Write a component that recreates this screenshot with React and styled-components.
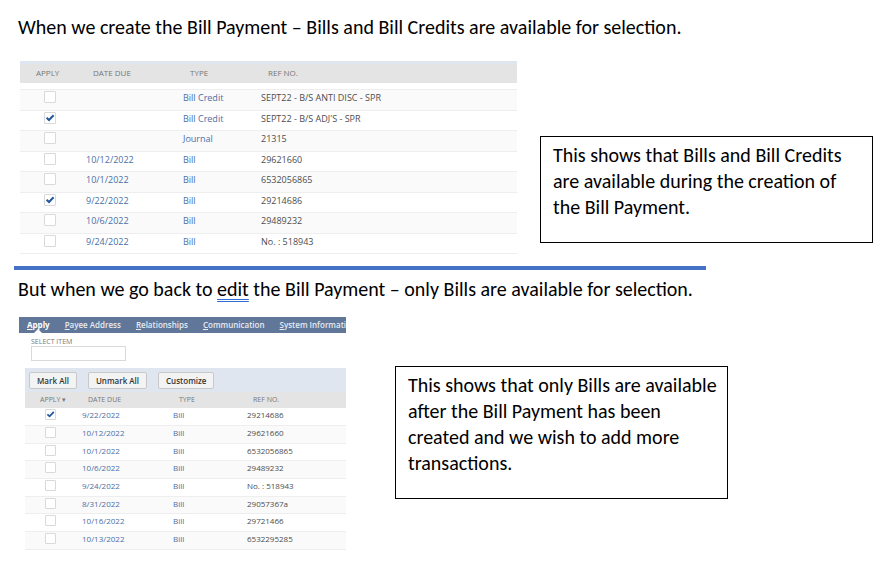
import React from 'react';
import styled, { createGlobalStyle } from 'styled-components';

const COLORS = {
  link: '#4a6fa8',
  text: '#4d4d4d',
  header: '#777777',
  header_bg: '#e4e4e4',
  stripe: '#fafafa',
  line: '#eeeeee',
  nav: '#607799',
  toolbar: '#dfe6f0',
  rule: '#4472c4',
};

const CREATE_ROWS = [
  { type: 'Bill Credit', ref: 'SEPT22 - B/S ANTI DISC - SPR' },
  { type: 'Bill Credit', ref: "SEPT22 - B/S ADJ'S - SPR", checked: true },
  { type: 'Journal', ref: '21315' },
  { date: '10/12/2022', type: 'Bill', ref: '29621660' },
  { date: '10/1/2022', type: 'Bill', ref: '6532056865' },
  { date: '9/22/2022', type: 'Bill', ref: '29214686', checked: true },
  { date: '10/6/2022', type: 'Bill', ref: '29489232' },
  { date: '9/24/2022', type: 'Bill', ref: 'No. : 518943' },
];

const EDIT_ROWS = [
  { date: '9/22/2022', type: 'Bill', ref: '29214686', checked: true },
  { date: '10/12/2022', type: 'Bill', ref: '29621660' },
  { date: '10/1/2022', type: 'Bill', ref: '6532056865' },
  { date: '10/6/2022', type: 'Bill', ref: '29489232' },
  { date: '9/24/2022', type: 'Bill', ref: 'No. : 518943' },
  { date: '8/31/2022', type: 'Bill', ref: '29057367a' },
  { date: '10/16/2022', type: 'Bill', ref: '29721466' },
  { date: '10/13/2022', type: 'Bill', ref: '6532295285' },
];

const TABS = ['Apply', 'Payee Address', 'Relationships', 'Communication', 'System Information'];

const ApplyBox = ({ label, checked, $small }) => (
  <CheckLabel $small={$small}>
    <CheckInput type="checkbox" aria-label={label} defaultChecked={checked} />
    <CheckMark viewBox="0 0 12 12" aria-hidden="true">
      <path d="M2.6 5.8 L5 8 L9.6 3.2" />
    </CheckMark>
  </CheckLabel>
);

const BillRows = ({ rows, $small }) =>
  rows.map((row) => (
    <tr key={row.ref}>
      <CheckCell>
        <ApplyBox label={`Apply ${row.ref}`} checked={row.checked} $small={$small} />
      </CheckCell>
      <td>{row.date && <BillLink href="#bill">{row.date}</BillLink>}</td>
      <td>
        <BillLink href="#bill">{row.type}</BillLink>
      </td>
      <td>{row.ref}</td>
    </tr>
  ));

const App = () => {
  return (
    <Page>
      <GlobalStyle />
      <Heading>
        When we create the Bill Payment – Bills and Bill Credits are available for selection.
      </Heading>
      <CreateSection>
        <CreateTable>
          <colgroup>
            <Col $width={59} />
            <Col $width={97} />
            <Col $width={78} />
            <col />
          </colgroup>
          <thead>
            <tr>
              <th>APPLY</th>
              <th>DATE DUE</th>
              <th>TYPE</th>
              <th>REF NO.</th>
            </tr>
          </thead>
          <tbody>
            <BillRows rows={CREATE_ROWS} />
          </tbody>
        </CreateTable>
        <Note $top={75} $height={107}>
          This shows that Bills and Bill Credits are available during the creation of the Bill
          Payment.
        </Note>
      </CreateSection>
      <RuleRow>
        <Rule />
      </RuleRow>
      <Heading>
        But when we go back to <Edit>edit</Edit> the Bill Payment – only Bills are available for
        selection.
      </Heading>
      <EditSection>
        <Panel>
          <Tabs>
            {TABS.map((tab, i) => (
              <Tab key={tab} type="button" $active={i === 0}>
                <u>{tab[0]}</u>
                {tab.slice(1)}
              </Tab>
            ))}
          </Tabs>
          <Field>
            <FieldLabel htmlFor="select-item">SELECT ITEM</FieldLabel>
            <FieldInput id="select-item" type="text" />
          </Field>
          <Sublist>
            <Toolbar>
              <ToolButton type="button">Mark All</ToolButton>
              <ToolButton type="button">Unmark All</ToolButton>
              <ToolButton type="button">Customize</ToolButton>
            </Toolbar>
            <EditTable>
              <colgroup>
                <Col $width={51} />
                <Col $width={91} />
                <Col $width={74} />
                <col />
              </colgroup>
              <thead>
                <tr>
                  <th>APPLY ▾</th>
                  <th>DATE DUE</th>
                  <th>TYPE</th>
                  <th>REF NO.</th>
                </tr>
              </thead>
              <tbody>
                <BillRows rows={EDIT_ROWS} $small />
              </tbody>
            </EditTable>
          </Sublist>
        </Panel>
        <Note $top={49} $height={133}>
          This shows that only Bills are available after the Bill Payment has been created and we
          wish to add more transactions.
        </Note>
      </EditSection>
    </Page>
  );
};

export default App;

const GlobalStyle = createGlobalStyle`
  * {
    box-sizing: border-box;
  }

  body {
    margin: 0;
    background: #ffffff;
    font-family: 'Open Sans', 'Noto Sans', sans-serif;
  }
`;

const Page = styled.main`
  padding: 12px 22px 0 14px;
`;

const Heading = styled.p`
  margin: 0;
  padding-left: 4px;
  color: #000000;
  font-family: Carlito, Lato, sans-serif;
  font-size: 20px;
  line-height: 30px;
`;

const Edit = styled.span`
  text-decoration: underline double #2f6bd0 1px;
  text-underline-offset: 3px;
  text-decoration-skip-ink: none;
`;

const CreateSection = styled.section`
  display: grid;
  grid-template-columns: 497fr 333fr;
  gap: 23px;
  align-items: start;
  margin-top: 19px;
  padding-left: 6px;
`;

const EditSection = styled.section`
  display: grid;
  grid-template-columns: 327fr 333fr 96fr;
  gap: 49px;
  align-items: start;
  margin-top: 13px;
  padding-left: 5px;
`;

const RuleRow = styled.div`
  display: grid;
  grid-template-columns: 692fr 167fr;
  margin: 12px 0 4px;
`;

const Rule = styled.hr`
  width: 100%;
  height: 4px;
  margin: 0;
  border: none;
  background: ${COLORS.rule};
`;

const Note = styled.aside`
  min-height: ${({ $height }) => $height}px;
  margin-top: ${({ $top }) => $top}px;
  padding: 5px 6px 5px 12px;
  border: 1px solid #000000;
  color: #000000;
  font-family: Carlito, Lato, sans-serif;
  font-size: 20px;
  line-height: 26px;
`;

const Table = styled.table`
  width: 100%;
  table-layout: fixed;
  border-collapse: separate;
  border-spacing: 0;
  color: ${COLORS.text};

  th {
    padding: 0;
    background: ${COLORS.header_bg};
    color: ${COLORS.header};
    font-weight: 400;
    text-align: left;
    vertical-align: top;
    white-space: nowrap;
  }

  td {
    padding: 0 0 0 7px;
    border-bottom: 1px solid ${COLORS.line};
    vertical-align: top;
    white-space: nowrap;
  }
`;

const CreateTable = styled(Table)`
  border-top: 3px solid ${COLORS.toolbar};
  font-size: 9px;
  line-height: 15px;

  th {
    height: 19px;
    padding-left: 14px;
    font-size: 8px;
    line-height: 18px;
  }

  th:first-child {
    padding-left: 16px;
  }

  /* blank strip between the header and the first row */
  tbody::before {
    content: '';
    display: table-row;
    height: 6px;
  }

  td {
    height: 20px;
  }

  tr:nth-child(odd) td {
    height: 21px;
    background: ${COLORS.stripe};
  }

  tr:first-child td {
    height: 22px;
    border-top: 1px solid ${COLORS.line};
  }
`;

const EditTable = styled(Table)`
  font-size: 8px;
  line-height: 14px;

  th {
    height: 16px;
    padding-left: 12px;
    font-size: 7px;
    line-height: 16px;
  }

  th:first-child {
    padding-left: 15px;
  }

  td {
    height: 18px;
    padding-left: 6px;
  }

  tr:nth-child(3n) td {
    height: 17px;
  }

  tr:nth-child(even) td {
    background: ${COLORS.stripe};
  }
`;

const Col = styled.col`
  width: ${({ $width }) => $width}px;
`;

const CheckCell = styled.td`
  && {
    padding: 0;
    text-align: center;
    line-height: 0;
  }
`;

const CheckLabel = styled.label`
  position: relative;
  display: inline-block;
  width: ${({ $small }) => ($small ? 11 : 12)}px;
  height: ${({ $small }) => ($small ? 11 : 12)}px;
  margin-top: 1px;
`;

const CheckInput = styled.input`
  appearance: none;
  display: block;
  width: 100%;
  height: 100%;
  margin: 0;
  border: 1px solid #d9d9d9;
  border-radius: 1px;
  background: #ffffff;
`;

const CheckMark = styled.svg`
  position: absolute;
  inset: 0;
  width: 100%;
  height: 100%;
  fill: none;
  stroke: #2458a0;
  stroke-width: 2;
  visibility: hidden;
  pointer-events: none;

  ${CheckInput}:checked + & {
    visibility: visible;
  }
`;

const BillLink = styled.a`
  color: ${COLORS.link};
  text-decoration: none;
`;

const Panel = styled.div`
  min-width: 0;
`;

const Tabs = styled.nav`
  display: flex;
  gap: 15px;
  height: 16px;
  padding-left: 8px;
  overflow: hidden;
  background: ${COLORS.nav};
`;

const Tab = styled.button`
  position: relative;
  flex: none;
  padding: 0;
  border: none;
  background: none;
  color: ${({ $active }) => ($active ? '#ffffff' : '#e6ebf2')};
  font-family: inherit;
  font-size: 8px;
  font-weight: ${({ $active }) => ($active ? 700 : 600)};
  line-height: 16px;

  &::after {
    content: '';
    display: ${({ $active }) => ($active ? 'block' : 'none')};
    position: absolute;
    bottom: 0;
    left: 50%;
    margin-left: -4px;
    border: 4px solid transparent;
    border-top: none;
    border-bottom-color: #ffffff;
  }
`;

const Field = styled.div`
  display: flex;
  flex-direction: column;
  align-items: flex-start;
  padding: 4px 12px 7px;
`;

const FieldLabel = styled.label`
  color: ${COLORS.header};
  font-size: 7px;
  line-height: 9px;
`;

const FieldInput = styled.input`
  width: 95px;
  height: 15px;
  padding: 0 4px;
  border: 1px solid #d9d9d9;
  background: #ffffff;
  font-family: inherit;
  font-size: 8px;
`;

const Sublist = styled.div`
  margin-left: 6px;
`;

const Toolbar = styled.div`
  display: flex;
  align-items: center;
  gap: 11px;
  height: 24px;
  padding-left: 4px;
  background: ${COLORS.toolbar};
`;

const ToolButton = styled.button`
  height: 17px;
  padding: 0 7px;
  border: 1px solid #c8c8c8;
  border-radius: 2px;
  background: #f3f3f3;
  color: #333333;
  font-family: inherit;
  font-size: 8px;
  font-weight: 600;
  line-height: 15px;
  white-space: nowrap;
`;
